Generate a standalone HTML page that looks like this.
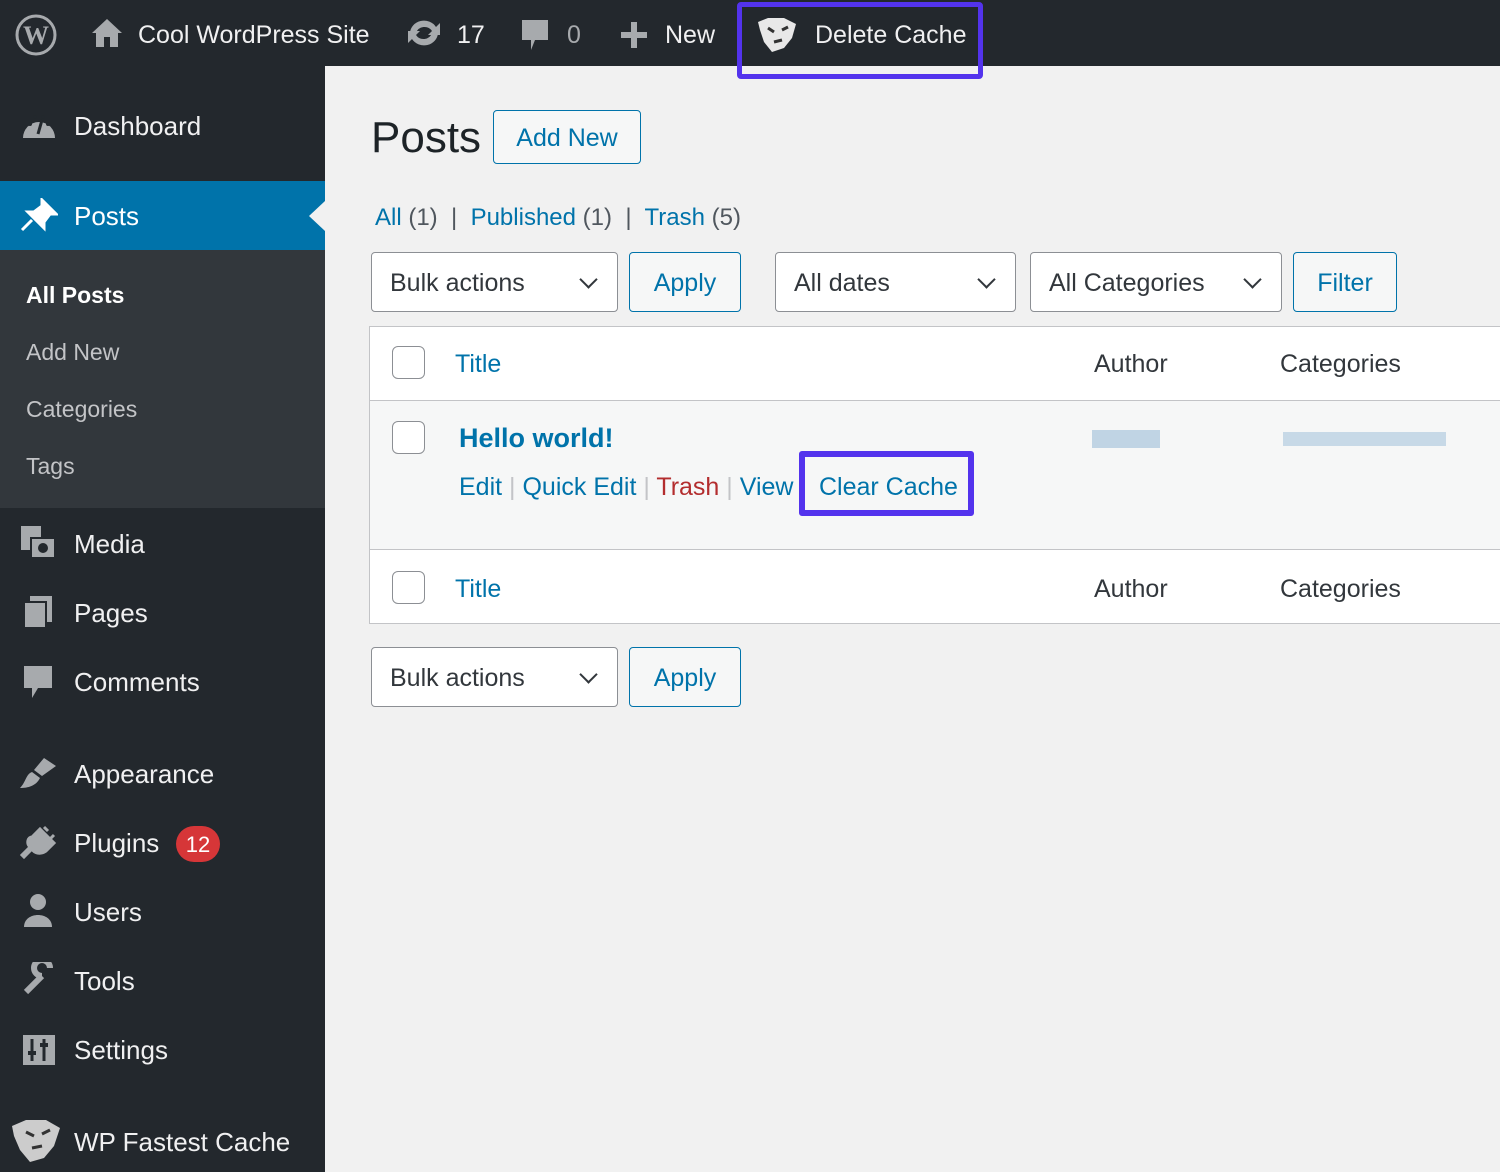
<!DOCTYPE html>
<html><head><meta charset="utf-8"><style>
*{margin:0;padding:0;box-sizing:border-box}
body{width:1500px;height:1172px;overflow:hidden;background:#f1f1f1;font-family:"Liberation Sans",sans-serif;position:relative;color:#32373c}
.a{position:absolute;white-space:nowrap}
#top{left:0;top:0;width:1500px;height:66px;background:#23282d}
#side{left:0;top:66px;width:325px;height:1106px;background:#23282d}
.tb{color:#f0f0f1;font-size:25px;top:21px}
.mi{color:#f0f0f1;font-size:26px;left:74px}
.sub{color:#c3c4c7;font-size:23px;left:26px}
.link{color:#0073aa}
.sel{background:#fff;border:1px solid #8c8f94;border-radius:4px;height:60px;font-size:25px;color:#32373c;padding:16px 18px}
.sel:after{content:"";position:absolute;right:22px;top:20px;width:11px;height:11px;border-right:2.5px solid #32373c;border-bottom:2.5px solid #32373c;transform:rotate(45deg)}
.btn{border:1px solid #0073aa;border-radius:4px;background:#f6f7f7;color:#0073aa;height:60px;font-size:25px;text-align:center;padding-top:16px}
.cb{width:33px;height:33px;border:1.5px solid #8c8f94;border-radius:6px;background:#fff;left:392px}
</style></head><body>
<div id="top" class="a"></div>
<div id="side" class="a"></div>
<!-- top bar -->
<svg class="a" style="left:14px;top:13px" width="44" height="44" viewBox="0 0 44 44"><circle cx="22" cy="22" r="19" fill="none" stroke="#a7aaad" stroke-width="3"/><text x="22" y="31" font-family="Liberation Serif" font-size="26" font-weight="bold" fill="#a7aaad" text-anchor="middle">W</text></svg>
<svg class="a" style="left:90px;top:17px" width="34" height="32" viewBox="0 0 34 32"><path d="M17 2 L2 16 H6 V30 H14 V20 H20 V30 H28 V16 H32 Z" fill="#a7aaad"/></svg>
<div class="a tb" style="left:138px">Cool WordPress Site</div>
<svg class="a" style="left:404px;top:17px" width="40" height="32" viewBox="0 0 40 32"><path d="M6 16 A14 13 0 0 1 32 10 L36 6 V18 H24 L28 14 A9 9 0 0 0 12 16Z M34 16 A14 13 0 0 1 8 22 L4 26 V14 H16 L12 18 A9 9 0 0 0 28 16Z" fill="#a7aaad"/></svg>
<div class="a tb" style="left:457px">17</div>
<svg class="a" style="left:519px;top:18px" width="32" height="34" viewBox="0 0 32 34"><path d="M3 2 H29 V22 H16 L12 32 V22 H3Z" fill="#a7aaad"/></svg>
<div class="a tb" style="left:567px;color:#a7aaad">0</div>
<svg class="a" style="left:619px;top:20px" width="30" height="30" viewBox="0 0 30 30"><path d="M12 2H18V12H28V18H18V28H12V18H2V12H12Z" fill="#a7aaad"/></svg>
<div class="a tb" style="left:665px">New</div>
<div class="a" style="left:737px;top:2px;width:246px;height:77px;border:5px solid #5333ed;border-radius:4px"></div>
<div class="a" style="left:742px;top:66px;width:236px;height:8px;background:#f1f1f1"></div>
<svg class="a" style="left:754px;top:16px" width="46" height="38" viewBox="0 0 46 38"><path d="M4 6 L14 2 L30 2 L42 8 L38 22 L30 32 L18 36 L10 26 L6 14Z" fill="#e8e8e8"/><path d="M14 12 L20 16 M28 14 L34 11 M20 26 L28 24" stroke="#333" stroke-width="3"/></svg>
<div class="a tb" style="left:815px">Delete Cache</div>
<!-- sidebar -->
<svg class="a" style="left:21px;top:108px" width="36" height="32" viewBox="0 0 36 32"><path d="M2 30 A16 16 0 1 1 34 30Z" fill="#a7aaad"/><circle cx="9" cy="16" r="2" fill="#23282d"/><circle cx="14" cy="9" r="2" fill="#23282d"/><circle cx="22" cy="9" r="2" fill="#23282d"/><circle cx="27" cy="16" r="2" fill="#23282d"/><path d="M17 26 L21 12" stroke="#23282d" stroke-width="3"/></svg>
<div class="a mi" style="top:111px">Dashboard</div>
<div class="a" style="left:0;top:181px;width:325px;height:69px;background:#0073aa"></div>
<div class="a" style="left:309px;top:201px;width:0;height:0;border-top:15px solid transparent;border-bottom:15px solid transparent;border-right:16px solid #f1f1f1"></div>
<svg class="a" style="left:20px;top:198px" width="38" height="34" viewBox="0 0 38 34"><path d="M22 2 L36 16 L30 16 L24 24 L24 30 L8 14 L14 14 L22 8Z M12 22 L2 32" stroke="#fff" stroke-width="3" fill="#fff"/></svg>
<div class="a mi" style="top:201px;color:#fff">Posts</div>
<div class="a" style="left:0;top:250px;width:325px;height:258px;background:#32373c"></div>
<div class="a sub" style="top:282px;color:#fff;font-weight:bold">All Posts</div>
<div class="a sub" style="top:339px">Add New</div>
<div class="a sub" style="top:396px">Categories</div>
<div class="a sub" style="top:453px">Tags</div>
<svg class="a" style="left:19px;top:524px" width="40" height="38" viewBox="0 0 40 38"><rect x="2" y="2" width="20" height="24" fill="#a7aaad"/><rect x="12" y="14" width="24" height="20" fill="#a7aaad" stroke="#23282d" stroke-width="2"/><circle cx="24" cy="24" r="5" fill="#23282d"/></svg>
<div class="a mi" style="top:529px">Media</div>
<svg class="a" style="left:22px;top:594px" width="32" height="36" viewBox="0 0 32 36"><rect x="8" y="2" width="22" height="26" fill="#a7aaad"/><rect x="2" y="8" width="22" height="26" fill="#a7aaad" stroke="#23282d" stroke-width="2"/></svg>
<div class="a mi" style="top:598px">Pages</div>
<svg class="a" style="left:22px;top:664px" width="32" height="36" viewBox="0 0 32 36"><path d="M2 2 H30 V24 H16 L10 34 V24 H2Z" fill="#a7aaad"/></svg>
<div class="a mi" style="top:667px">Comments</div>
<svg class="a" style="left:18px;top:756px" width="40" height="34" viewBox="0 0 40 34"><path d="M26 2 L38 10 L24 20 L16 14Z M14 16 L22 22 C18 30 10 32 2 32 C8 26 8 18 14 16Z" fill="#a7aaad"/></svg>
<div class="a mi" style="top:759px">Appearance</div>
<svg class="a" style="left:20px;top:825px" width="38" height="36" viewBox="0 0 38 36"><path d="M20 4 L34 18 L26 26 C20 30 14 28 12 24 L10 26 L4 32 L2 30 L8 24 L10 22 C6 18 8 12 12 12Z M24 2 L28 6 M34 10 L30 14" stroke="#a7aaad" stroke-width="3" fill="#a7aaad"/></svg>
<div class="a mi" style="top:828px">Plugins</div>
<div class="a" style="left:176px;top:826px;width:44px;height:36px;border-radius:18px;background:#d63638;color:#fff;font-size:22px;text-align:center;padding-top:6px">12</div>
<svg class="a" style="left:22px;top:893px" width="32" height="34" viewBox="0 0 32 34"><circle cx="16" cy="9" r="8" fill="#a7aaad"/><path d="M2 34 C2 18 30 18 30 34Z" fill="#a7aaad"/></svg>
<div class="a mi" style="top:897px">Users</div>
<svg class="a" style="left:22px;top:962px" width="34" height="34" viewBox="0 0 34 34"><path d="M4 30 L20 14 M20 14 A8 8 0 1 1 28 6" stroke="#a7aaad" stroke-width="6" fill="none"/></svg>
<div class="a mi" style="top:966px">Tools</div>
<svg class="a" style="left:22px;top:1034px" width="34" height="32" viewBox="0 0 34 32"><rect x="1" y="1" width="32" height="30" fill="#a7aaad"/><path d="M10 5 V27 M22 5 V27" stroke="#23282d" stroke-width="3"/><rect x="6" y="17" width="8" height="4" fill="#23282d"/><rect x="18" y="9" width="8" height="4" fill="#23282d"/></svg>
<div class="a mi" style="top:1035px">Settings</div>
<svg class="a" style="left:8px;top:1118px" width="56" height="46" viewBox="0 0 56 46"><path d="M4 8 L18 2 L38 2 L52 10 L46 28 L36 40 L22 44 L12 32 L6 18Z" fill="#ccc"/><path d="M18 14 L26 18 M34 16 L42 12 M24 30 L34 28" stroke="#333" stroke-width="3"/></svg>
<div class="a mi" style="top:1127px">WP Fastest Cache</div>
<!-- content -->
<div class="a" style="left:371px;top:113px;font-size:44px;color:#1d2327">Posts</div>
<div class="a btn" style="left:493px;top:110px;width:148px;height:54px;padding-top:13px">Add New</div>
<div class="a" style="left:375px;top:204px;font-size:24px;color:#50575e"><span class="link">All</span> (1) &nbsp;|&nbsp; <span class="link">Published</span> (1) &nbsp;|&nbsp; <span class="link">Trash</span> (5)</div>
<div class="a sel" style="left:371px;top:252px;width:247px">Bulk actions</div>
<div class="a btn" style="left:629px;top:252px;width:112px">Apply</div>
<div class="a sel" style="left:775px;top:252px;width:241px">All dates</div>
<div class="a sel" style="left:1030px;top:252px;width:252px">All Categories</div>
<div class="a btn" style="left:1293px;top:252px;width:104px">Filter</div>
<div class="a" style="left:369px;top:326px;width:1140px;height:298px;background:#fff;border:1px solid #c3c4c7"></div>
<div class="a" style="left:370px;top:400px;width:1130px;height:150px;background:#f6f7f7;border-top:1px solid #c3c4c7;border-bottom:1px solid #c3c4c7"></div>
<div class="a cb" style="top:346px"></div>
<div class="a link" style="left:455px;top:350px;font-size:25px">Title</div>
<div class="a" style="left:1094px;top:350px;font-size:25px">Author</div>
<div class="a" style="left:1280px;top:350px;font-size:25px">Categories</div>
<div class="a cb" style="top:421px"></div>
<div class="a link" style="left:459px;top:423px;font-size:27px;font-weight:bold">Hello world!</div>
<div class="a" style="left:1092px;top:430px;width:68px;height:18px;background:#a9c4dc;opacity:.7"></div>
<div class="a" style="left:1283px;top:432px;width:163px;height:14px;background:#b4cce0;opacity:.7"></div>
<div class="a" style="left:459px;top:473px;font-size:25px;color:#c3c4c7"><span class="link">Edit</span> | <span class="link">Quick Edit</span> | <span style="color:#b32d2e">Trash</span> | <span class="link">View</span></div>
<div class="a" style="left:799px;top:451px;width:175px;height:65px;border:6px solid #5333ed;border-radius:3px"></div>
<div class="a link" style="left:819px;top:473px;font-size:25px">Clear Cache</div>
<div class="a cb" style="top:571px"></div>
<div class="a link" style="left:455px;top:575px;font-size:25px">Title</div>
<div class="a" style="left:1094px;top:575px;font-size:25px">Author</div>
<div class="a" style="left:1280px;top:575px;font-size:25px">Categories</div>
<div class="a sel" style="left:371px;top:647px;width:247px">Bulk actions</div>
<div class="a btn" style="left:629px;top:647px;width:112px">Apply</div>
</body></html>
